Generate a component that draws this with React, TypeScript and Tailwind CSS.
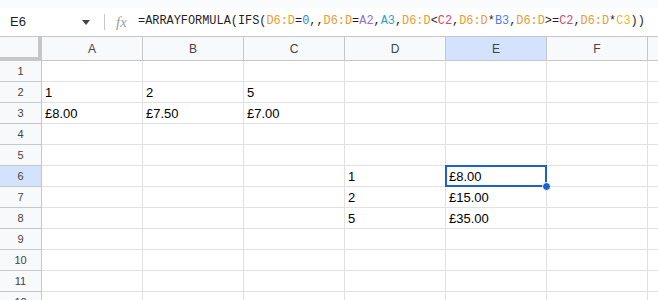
import React from "react";

const COLS = ["A", "B", "C", "D", "E", "F", "G"];
const ROWS = Array.from({ length: 12 }, (_, i) => i + 1);

// cell values keyed by "A2" style refs
const VALUES: Record<string, string> = {
  A2: "1",
  B2: "2",
  C2: "5",
  A3: "£8.00",
  B3: "£7.50",
  C3: "£7.00",
  D6: "1",
  D7: "2",
  D8: "5",
  E6: "£8.00",
  E7: "£15.00",
  E8: "£35.00",
};

const orange = "text-[#e99b35]";

function Formula() {
  const d = <span className={orange}>D6:D</span>;
  return (
    <div className="whitespace-nowrap text-[11.9px] text-[#1f1f1f] font-['Liberation_Mono',monospace]">
      =ARRAYFORMULA(IFS({d}=<span className="text-[#3c7be6]">0</span>,,{d}=
      <span className="text-[#9a6bd3]">A2</span>,<span className="text-[#2aa3c2]">A3</span>,{d}&lt;
      <span className="text-[#d14b70]">C2</span>,{d}*<span className="text-[#4c7fe3]">B3</span>,{d}&gt;=
      <span className="text-[#d14b70]">C2</span>,{d}*<span className="text-[#efb52c]">C3</span>))
    </div>
  );
}

export default function App() {
  return (
    <div className="w-[658px] h-[300px] overflow-hidden bg-white font-['Liberation_Sans',Arial,sans-serif]">
      <div className="h-[8px] bg-[#f9fbfd]" />

      {/* formula bar */}
      <div className="h-[29px] flex items-center border-b border-[#c7c7c7]">
        <div className="w-[78px] pl-[10px] text-[13px] text-[#1f1f1f]">E6</div>
        <svg width="8" height="5" viewBox="0 0 8 5" className="ml-[4px]">
          <path d="M0 0h8L4 5z" fill="#444" />
        </svg>
        <div className="ml-[14px] w-px h-[16px] bg-[#c7c7c7]" />
        <div className="ml-[11px] w-[22px] text-[15px] italic text-[#9aa0a6] font-['Liberation_Serif',serif] leading-none">
          fx
        </div>
        <Formula />
      </div>

      {/* header row */}
      <div className="flex h-[24px]">
        <div className="w-[42px] shrink-0 bg-[#f8f9fa] border-r-4 border-b-4 border-[#c7c7c7]" />
        {COLS.map((c) => (
          <div
            key={c}
            className={`w-[101px] shrink-0 flex items-center justify-center text-[12px] text-[#444] border-r border-b border-[#c7c7c7] ${
              c === "E" ? "bg-[#d3e3fd]" : "bg-[#f8f9fa]"
            }`}
          >
            {c === "G" ? "" : c}
          </div>
        ))}
      </div>

      {ROWS.map((r) => (
        <div key={r} className="flex h-[21px]">
          <div
            className={`w-[42px] shrink-0 flex items-center justify-center text-[11px] text-[#444] border-r border-b border-[#c7c7c7] ${
              r === 6 ? "bg-[#d3e3fd] text-[#1f1f1f]" : "bg-[#f8f9fa]"
            }`}
          >
            {r}
          </div>
          {COLS.map((c) => {
            const ref = `${c}${r}`;
            const selected = ref === "E6";
            return (
              <div
                key={c}
                className="relative w-[101px] shrink-0 flex items-center pl-[3px] pt-px text-[13px] text-black border-r border-b border-[#e1e1e1]"
              >
                {VALUES[ref]}
                {selected && (
                  <>
                    <div className="absolute -left-px -top-px w-[102px] h-[22px] border-2 border-[#1a62c9]" />
                    <div className="absolute -right-[5px] -bottom-[5px] w-[9px] h-[9px] rounded-full bg-[#1a62c9] border border-white z-10" />
                  </>
                )}
              </div>
            );
          })}
        </div>
      ))}
    </div>
  );
}
